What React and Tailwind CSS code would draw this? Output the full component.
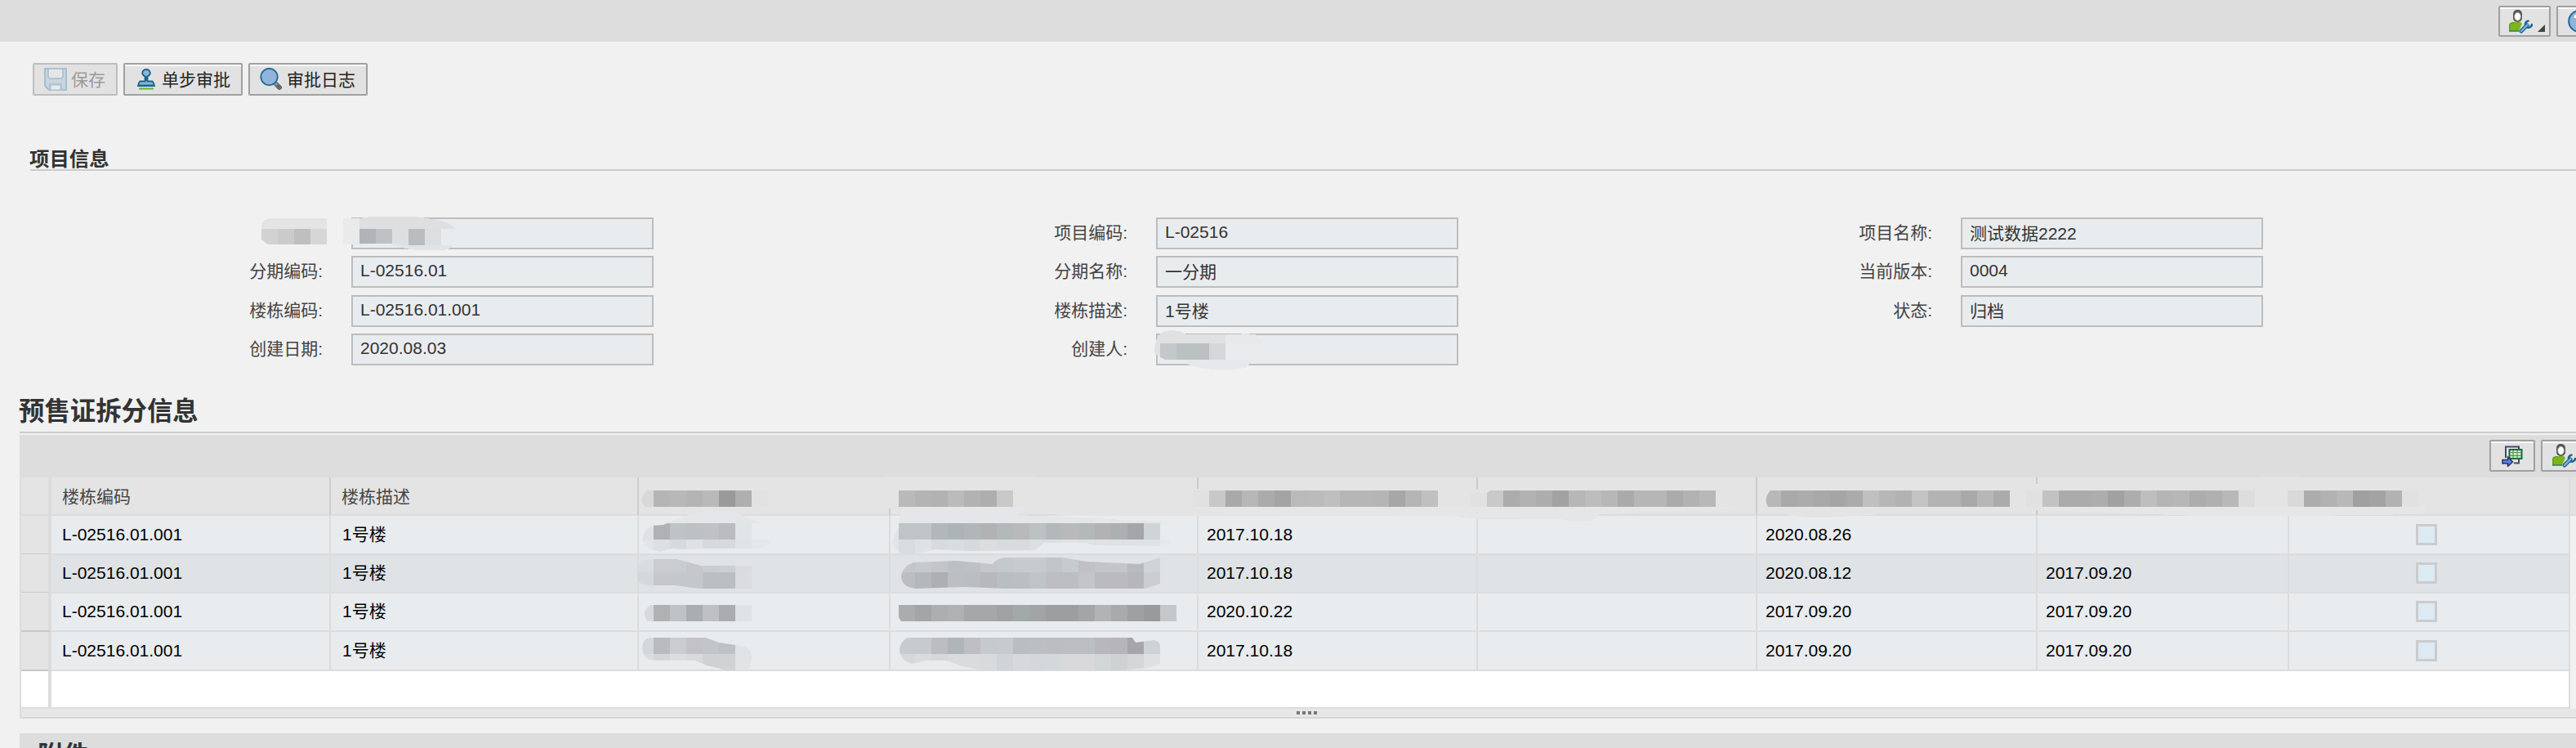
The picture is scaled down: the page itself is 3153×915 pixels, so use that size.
const headers = ['楼栋编码', '楼栋描述', '', '', '', '', '', '', '']

const rows = [
  { code: 'L-02516.01.001', name: '1号楼', d1: '2017.10.18', d2: '2020.08.26', d3: '', height: 'h-[47px]', bg: 'bg-[#e9ecef]' },
  { code: 'L-02516.01.001', name: '1号楼', d1: '2017.10.18', d2: '2020.08.12', d3: '2017.09.20', height: 'h-[47px]', bg: 'bg-[#dfe3e6]' },
  { code: 'L-02516.01.001', name: '1号楼', d1: '2020.10.22', d2: '2017.09.20', d3: '2017.09.20', height: 'h-[48px]', bg: 'bg-[#e9ecef]' },
  { code: 'L-02516.01.001', name: '1号楼', d1: '2017.10.18', d2: '2017.09.20', d3: '2017.09.20', height: 'h-[47px]', bg: 'bg-[#e9ecef]' },
]

const fields = [
  [
    { label: '', value: '' },
    { label: '分期编码:', value: 'L-02516.01' },
    { label: '楼栋编码:', value: 'L-02516.01.001' },
    { label: '创建日期:', value: '2020.08.03' },
  ],
  [
    { label: '项目编码:', value: 'L-02516' },
    { label: '分期名称:', value: '一分期', cjk: true },
    { label: '楼栋描述:', value: '1号楼', cjk: true },
    { label: '创建人:', value: '' },
  ],
  [
    { label: '项目名称:', value: '测试数据2222', cjk: true },
    { label: '当前版本:', value: '0004' },
    { label: '状态:', value: '归档', cjk: true },
  ],
]

const gridCols = 'grid grid-cols-[37px_342px_377px_308px_377px_342px_342px_343px_308px_344px]'

// pale smudges around the masked values
const halos = [
  ['M320 280V274Q324 267 332 267H400V280Z', '#e4e4e4'],
  ['M420 267H442V299H420Z', '#e9eaea'],
  ['M440 267L454 265H508L522 267Q550 270 557 280H440Z', '#dedfe1'],
  ['M475 299H557Q552 305 542 306H510Q495 304 475 299Z', '#e2e3e5'],
  ['M442 298H480V300H442Z', '#e9ecef'],
  ['M1414 434Q1411 420 1420 408Q1436 400 1452 409H1512L1527 408Q1541 411 1544 420H1420V436Z', '#dfe1e3'],
  ['M1500 409H1536Q1542 414 1544 420H1500Z', '#e7e9eb'],
  ['M1453 440H1535L1524 450Q1512 452 1500 452Q1470 453 1453 445Z', '#e6e8eb'],
  ['M786 600L800 596L1060 590L1085 583H1265L1290 587L1400 594L1480 599H1800L1832 600L1860 596H2100L2120 592L2128 600V620H2115L2090 628L1958 629L1948 637L1930 638L1910 635H1809L1775 631H1300L1258 622L1245 631H1118L1105 620L1020 629H905L933 640H815L843 630L800 620Z', '#e4e4e5'],
  ['M800 620H1460L1500 629L1775 631L1808 634L1910 635Q1945 643 1958 629L2120 622V620H2115L1460 620Z', '#e5e6e8'],
  ['M843 630Q870 620 905 629L933 640H815Z', '#e4e6e9'],
  ['M1105 620H1258L1245 630L1340 634L1430 639V640H1100Z', '#e4e6e9'],
  ['M2161 620L2170 596L2200 590Q2210 582 2228 592L2275 584Q2290 586 2290 597L2340 592H2640L2700 586H2750L2770 583H2812L2850 588L2964 597L2972 620L2965 628L2820 631H2750L2500 624H2460L2340 627L2250 632Q2200 637 2170 624Z', '#e4e4e5'],
  ['M2500 620H2972L2965 629L2820 631H2690L2500 624Z', '#e5e6e8'],
]

// each band is a run of 20px blocks; clip gives the brushed outline
const masks = [
  { id: 'm1', clip: 'M332 280H400V299H328L320 293V280Z', bands: [[320, 280, 20, ['#d2d2d2', '#cbcbcb', '#bfbfbf', '#d6d6d6']]] },
  { id: 'm2', clip: 'M420 280H557V300H495L478 298H420Z', bands: [[420, 280, 20, ['#e9eaeb', '#b0b4b8', '#c0c1c4', '#dce0e3', '#b9bdc0', '#dbdfe2', '#e9ecee']]] },
  { id: 'm3', clip: 'M1420 420H1540V440H1426L1420 437Z', bands: [[1420, 420, 20, ['#c4c8cb', '#bbc0c3', '#bbc0c3', '#d5d7da', '#e9ecef', '#e9ecef']]] },
  { id: 'm4', clip: 'M792 600H940V620H790Q780 610 792 600Z', bands: [[780, 600, 20, ['#d8d8d8', '#b5b5b5', '#b8b8b8', '#b4b4b4', '#b9b9b9', '#9a9a9a', '#afafaf', '#e2e2e2']]] },
  { id: 'm5', clip: 'M1100 600H1240V620H1100Z', bands: [[1100, 600, 20, ['#b9b9b9', '#b4b4b4', '#b2b2b2', '#bbbbbb', '#b2b2b2', '#aeaeae', '#c9c9c9']]] },
  { id: 'm6', clip: 'M1460 600H1760V620H1460Z', bands: [[1460, 600, 20, ['#e1e1e1', '#c8c8c8', '#a9a9a9', '#b7b7b7', '#ababab', '#a4a4a4', '#bababa', '#bbbbbb', '#bfbfbf', '#b6b6b6', '#b6b6b6', '#b5b5b5', '#a7a7a7', '#b5b5b5', '#c0c0c0']]] },
  { id: 'm7', clip: 'M1800 603H1820L1824 600H2100V620H1800Z', bands: [[1800, 600, 20, ['#e1e1e1', '#c9c9c9', '#acacac', '#b2b2b2', '#adadad', '#a2a2a2', '#b7b7b7', '#bdbdbd', '#b7b7b7', '#aaaaaa', '#b6b6b6', '#b6b6b6', '#ababab', '#b2b2b2', '#b8b8b8']]] },
  { id: 'm8', clip: 'M2167 600H2460V620H2164Q2158 610 2167 600Z', bands: [[2160, 600, 20, ['#b8b8b8', '#a9a9a9', '#acacac', '#a8a8a8', '#a5a5a5', '#ababab', '#c0c0c0', '#b7b7b7', '#b2b2b2', '#c3c3c3', '#b3b3b3', '#b3b3b3', '#a9a9a9', '#b7b7b7', '#ababab']]] },
  { id: 'm9', clip: 'M2480 600H2760V620H2480Z', bands: [[2480, 600, 20, ['#e1e1e1', '#c2c2c2', '#ababab', '#ababab', '#adadad', '#a1a1a1', '#adadad', '#bebebe', '#b5b5b5', '#b7b7b7', '#adadad', '#b0b0b0', '#b8b8b8', '#dddddd']]] },
  { id: 'm10', clip: 'M2800 600H2960V620H2800Z', bands: [[2800, 600, 20, ['#d9d9d9', '#acacac', '#b2b2b2', '#b8b8b8', '#a0a0a0', '#a3a3a3', '#b2b2b2', '#e1e1e1']]] },
  { id: 'm11', clip: 'M800 643L812 642L817 640H920V660H943Q942 670 928 671H860L842 672L822 671L808 675Q790 672 786 660Q788 646 800 643Z', bands: [
    [780, 640, 20, ['#dfe2e4', '#b0b1b5', '#bfc3c6', '#bcc1c4', '#c0c1c5', '#babcc0', '#e1e5e8']],
    [780, 660, 20, ['#e2e4e7', '#dde0e2', '#d6dadd', '#e0e1e4', '#d5dadd', '#d5dadd', '#e0e4e7', '#e4e8eb', '#e5e9ec']],
  ] },
  { id: 'm12', clip: 'M1100 640H1420V660H1434Q1431 668 1425 668L1340 667L1330 664H1277L1268 673L1185 674L1145 672L1125 677Q1095 683 1092 662L1100 645Z', bands: [
    [1080, 640, 20, ['#e0e4e7', '#bfc4c7', '#bfc4c7', '#b1b7bb', '#adb4b8', '#b2b6b9', '#b2b2b4', '#b3b8bb', '#b9b9bb', '#bcc1c4', '#b3b8bb', '#b9b9bb', '#b3b8bb', '#b2b2b4', '#acb0b3', '#a5a6aa', '#cfd4d7']],
    [1080, 660, 20, ['#e2e4e7', '#d8dde0', '#dfe2e5', '#d9dadd', '#d9dde0', '#d5dadd', '#dddde0', '#d7dbde', '#d9dadd', '#dbdfe2', '#dbdfe2', '#dfe2e5', '#dfe2e5', '#dfe2e5', '#dfe2e5', '#dfe2e5', '#dfe2e5', '#e5e9ec']],
  ] },
  { id: 'm13', clip: 'M800 684H828L858 692H920V720H855L826 716H795Q780 714 780 708V690Q784 685 800 684Z', bands: [
    [780, 680, 20, ['#d9dddf', '#c9cdd0', '#c9cdd0', '#c6c7ca', '#c9cdd0', '#cdcfd2', '#d8dcdf']],
    [780, 700, 20, ['#d5d8db', '#c6c7ca', '#c4c8cb', '#c4c8cb', '#babfc2', '#babfc2', '#dbdcdf']],
  ] },
  { id: 'm14', clip: 'M1118 688L1170 686L1215 690Q1220 683 1230 682H1300L1330 687L1395 690L1420 682V714L1402 720H1230L1180 718L1120 720Q1103 718 1103 704Q1106 692 1118 688Z', bands: [
    [1100, 680, 20, ['#c4c6c9', '#c6cacd', '#c2c6c9', '#bbc0c3', '#bdc1c4', '#c4c6c9', '#c4c9cc', '#c6cbce', '#c6cbce', '#c1c6c9', '#c6cbce', '#bfc1c4', '#c3c5c8', '#c3c5c8', '#b6bbbe', '#cfd4d7']],
    [1100, 700, 20, ['#bcbdc0', '#b3b8bb', '#adafb2', '#bcbec1', '#b9bec1', '#b6b8bb', '#b9bec1', '#babfc2', '#bfc4c7', '#bcbec1', '#bcbec1', '#c4c5c8', '#bbbbbf', '#bbbbbf', '#b7b7bb', '#cccdd0']],
  ] },
  { id: 'm15', clip: 'M796 740H920V760H792Q784 748 796 740Z', bands: [[780, 740, 20, ['#d7d9dc', '#b0b1b3', '#bfc3c6', '#a9aeb1', '#bfc0c4', '#abacaf', '#dfe3e6']]] },
  { id: 'm16', clip: 'M1100 740H1440V760H1103L1100 755Z', bands: [[1100, 740, 20, ['#abacae', '#a4a5a7', '#acaeb0', '#b0b1b5', '#a6a7a9', '#a6a7a9', '#a1a2a4', '#a3a8ab', '#a2a4a6', '#9c9ea0', '#9d9ea0', '#a3a5a7', '#b2b3b7', '#a8aaac', '#9e9fa1', '#989a9c', '#c4c8cb']]] },
  { id: 'm17', clip: 'M794 780H864L880 786L900 789Q920 790 920 803Q920 818 912 820H890L865 814L850 808H800Q786 806 786 792Q787 782 794 780Z', bands: [
    [780, 780, 20, ['#d3d8db', '#babbbf', '#c9cdd0', '#c3c3c7', '#c2c6c9', '#bdc2c5', '#e0e4e7']],
    [780, 800, 20, ['#d9dddf', '#d3d7da', '#dddde1', '#d7dbde', '#cfd1d5', '#cfd3d6', '#e0e4e7']],
  ] },
  { id: 'm18', clip: 'M1112 780H1386L1390 786L1412 783Q1420 784 1420 790V812L1405 817L1370 820H1200L1178 815L1158 808L1135 808L1116 812Q1101 808 1101 793Q1104 782 1112 780Z', bands: [
    [1100, 780, 20, ['#c7cbce', '#c7cbce', '#bdbdc1', '#b0b5b8', '#bfbfc3', '#c5cacd', '#c7cbce', '#b9bec1', '#bbbfc2', '#bcbdc1', '#bcbec1', '#bbbfc2', '#b8b8bc', '#b6b6ba', '#a6a6aa', '#cfd3d6']],
    [1100, 800, 20, ['#d5d8db', '#dadbde', '#d5d8db', '#dadbdf', '#dadbdf', '#d8dbde', '#d0d4d7', '#d7d8db', '#d3d7da', '#d4d8db', '#d9d9dd', '#d9d9dd', '#d2d6d9', '#cfd2d4', '#d4d7da', '#dde1e4']],
  ] },
]

function Masks() {
  return (
    <svg className="pointer-events-none absolute left-0 top-0" width="3153" height="915" shapeRendering="crispEdges">
      {halos.map(([d, fill]) => <path key={d} d={d} fill={fill} />)}
      {masks.map(m => (
        <g key={m.id} clipPath={`url(#${m.id})`}>
          <clipPath id={m.id}><path d={m.clip} /></clipPath>
          {m.bands.map(([x, y, h, colors]) => colors.map((c, i) => (
            <rect key={`${y}-${i}`} x={x + i * 20} y={y} width="20" height={h} fill={c} />
          )))}
        </g>
      ))}
    </svg>
  )
}

function SaveIcon() {
  return (
    <svg className="shrink-0" width="28" height="28" viewBox="0 0 28 28" fill="none">
      <path d="M1 1H27V27H6L1 22Z" fill="#c9d4df" stroke="#a3c0d2" strokeWidth="2" />
      <path d="M5 1H23V11L21 13H7L5 11Z" fill="#e6e6e6" stroke="#a3c0d2" strokeWidth="1.6" />
      <path d="M7 27V20H21V27" fill="#c9d4df" stroke="#a3c0d2" strokeWidth="1.6" />
      <path d="M9 22H19V26H9Z" fill="#e9e9e9" />
    </svg>
  )
}

function StampIcon() {
  return (
    <svg className="shrink-0" width="22" height="26" viewBox="0 0 22 26" fill="none">
      <path d="M9.500 9.500Q6 7.500 6.200 5Q7 1 11 1Q15 1 15.800 5Q16 7.500 12.500 9.500V15.500H18.500Q20.500 17 21 21H1Q1.500 17 3.500 15.500H9.500Z" fill="#8fb3d6" stroke="#1a6592" strokeWidth="1.800" />
      <path d="M11 9V15M1 20.500H21" stroke="#1a6592" strokeWidth="2.200" />
      <path d="M2 24.500H20" stroke="#6fb52c" strokeWidth="2.200" />
    </svg>
  )
}

function MagnifierIcon() {
  return (
    <svg className="shrink-0" width="28" height="28" viewBox="0 0 28 28" fill="none">
      <path d="M20.500 20.500L24 24" stroke="#666" strokeWidth="6" strokeLinecap="round" />
      <path d="M18 18L21 21" stroke="#999" strokeWidth="3" />
      <circle cx="11.500" cy="11" r="10.200" fill="#92b4d9" stroke="#1d6a9b" strokeWidth="1.800" />
    </svg>
  )
}

function HelpIcon() {
  return (
    <svg className="shrink-0" width="28" height="28" viewBox="0 0 28 28" fill="none">
      <circle cx="14" cy="14" r="12.800" fill="#92b4d9" stroke="#1d6a9b" strokeWidth="2" />
      <path d="M9 10Q9 6 14 6Q19 6 19 10Q19 13 14 15V18" stroke="#fff" strokeWidth="3" />
      <circle cx="14" cy="22" r="1.800" fill="#fff" />
    </svg>
  )
}

function UserWrenchIcon() {
  return (
    <svg className="shrink-0" width="29" height="29" viewBox="0 0 29 29" fill="none">
      <path d="M0 26V18Q1 15 6 15H14L16 17L12 26Z" fill="#7ab51d" />
      <path d="M1 26V18Q2 15.500 7 15.500" stroke="#5a9a2c" strokeWidth="1.200" />
      <path d="M0 26H12" stroke="#3f8055" strokeWidth="1.600" />
      <rect x="5" y="0" width="11" height="15" rx="5" fill="#555" />
      <ellipse cx="10.500" cy="8.200" rx="3.800" ry="5" fill="#fff" stroke="#aaa" strokeWidth=".8" />
      <path d="M15 26L22 19" stroke="#1f6592" strokeWidth="5" strokeLinecap="round" />
      <path d="M24.500 13.500Q19.500 14 20 19Q21.500 22.500 25 21.500Q28 20.500 28.500 17" stroke="#1f6592" strokeWidth="2.600" />
      <path d="M15 26L22.500 18.500" stroke="#7fb2dc" strokeWidth="2.400" strokeLinecap="round" />
    </svg>
  )
}

function ExportIcon() {
  return (
    <svg className="shrink-0" width="26" height="26" viewBox="0 0 26 26" fill="none">
      <path d="M5 15V1.500H21V5M15 21.500H21V17" fill="#ebebf0" stroke="#45476b" strokeWidth="2" />
      <rect x="9.500" y="5" width="15" height="11" fill="#dce9c5" stroke="#0d6b47" strokeWidth="2" />
      <path d="M10 8.500H24M10 12.300H24M14 6V16M19 6V16" stroke="#4f9a55" strokeWidth="1.200" />
      <path d="M1 17.500H7.500V14L13.500 20L7.500 25.500V22H1Z" fill="#547ff0" stroke="#303550" strokeWidth="1.500" />
    </svg>
  )
}

function Button({ children, className }) {
  return (
    <button className={`flex shrink-0 items-center rounded-[2px] border-2 border-[#a0a0a0] bg-[#e2e2e2] shadow-[inset_0_2px_0_#fff] ${className}`}>
      {children}
    </button>
  )
}

function Field({ label, value, cjk }) {
  return (
    <div className="flex items-start">
      <span className="mr-[35px] mt-[5px] w-[120px] text-right leading-[28px] text-[#444]">{label}</span>
      <div className={`h-[39px] w-[370px] border-2 border-[#bdbdbd] bg-[#e9ecef] pl-[9px] leading-[28px] text-[#333] ${cjk ? 'pt-[4px]' : 'pt-[2px]'}`}>{value}</div>
    </div>
  )
}

function Cell({ children, className = '' }) {
  return <div className={`border-b-2 border-r-2 border-[#dcdcdc] ${className}`}>{children}</div>
}

export default function App() {
  return (
    <div className="relative flex h-[915px] w-[3153px] flex-col overflow-hidden bg-[#f1f1f1] font-['Liberation_Sans','Noto_Sans_CJK_SC',sans-serif] text-[21px]">
      <header className="flex h-[51px] shrink-0 items-start gap-[7px] bg-[#ddd] pl-[3058px] pt-[7px]">
        <Button className="h-[38px] w-[64px] pl-[11px]">
          <UserWrenchIcon />
          <svg className="ml-[6px] mt-[17px] shrink-0" width="9" height="9"><path d="M9 0V9H0Z" fill="#444" /></svg>
        </Button>
        <Button className="h-[38px] w-[64px] pl-[12px]"><HelpIcon /></Button>
      </header>

      <div className="flex h-[131px] shrink-0 items-start gap-[7px] pl-[40px] pt-[26px] leading-[28px] text-[#222]">
        <button className="flex h-[40px] w-[104px] items-center gap-[5px] rounded-[2px] border-2 border-[#bebebe] bg-[#e2e2e2] pl-[12px] text-[#9b9b9b]">
          <SaveIcon />
          <span className="pt-[2px]">保存</span>
        </button>
        <Button className="h-[40px] w-[146px] gap-[8px] pl-[15px]">
          <StampIcon />
          <span className="pt-[2px]">单步审批</span>
        </Button>
        <Button className="h-[40px] w-[146px] gap-[5px] pl-[12px]">
          <MagnifierIcon />
          <span className="pt-[2px]">审批日志</span>
        </Button>
      </div>

      <h2 className="ml-[37px] h-[27px] shrink-0 border-b-2 border-[#ccc] text-[24.400px] font-bold leading-[25px] text-[#333]">
        <span className="-ml-px">项目信息</span>
      </h2>

      <div className="flex h-[275px] shrink-0 gap-[460px] pl-[275px] pt-[57px]">
        {fields.map((col, i) => (
          <div key={i} className="flex w-[525px] flex-col gap-[8.400px]">
            {col.map((f, j) => <Field key={j} {...f} />)}
          </div>
        ))}
      </div>

      <h2 className="ml-[24px] h-[46px] shrink-0 border-b-2 border-[#ccc] text-[31.400px] font-bold leading-[39px] text-[#333]">
        <span className="-ml-px">预售证拆分信息</span>
      </h2>

      <section className="ml-[24px] mt-[2px] shrink-0 border-l-2 border-[#dcdcdc]">
        <div className="-ml-[2px] flex h-[52px] gap-[7px] bg-[#ddd] pl-[3023px] pt-[6px]">
          <Button className="h-[39px] w-[56px] pl-[13px]"><ExportIcon /></Button>
          <Button className="h-[39px] w-[64px] pl-[12px]"><UserWrenchIcon /></Button>
        </div>

        <div className="flex">
          <div className="w-[3120px] shrink-0">
            <div className={`${gridCols} h-[47px] bg-[#e4e4e4] leading-[48px] text-[#444]`}>
              <div className="border-b-2 border-r-4 border-[#dcdcdc]" />
              {headers.map((h, i) => (
                <div key={i} className={`h-[47px] border-b-2 border-b-[#dcdcdc] border-r-2 pl-[13px] ${i === 8 ? 'border-r-[#dcdcdc]' : 'border-r-[#ccc]'}`}>{h}</div>
              ))}
            </div>
            {rows.map((r, i) => (
              <div key={i} className={`${gridCols} ${r.height} ${r.bg} leading-[46px] text-black`}>
                <div className="border-b-2 border-r-4 border-b-[#c8c8c8] border-r-[#dcdcdc] bg-[#e4e4e4]" />
                <Cell className="pl-[13px]">{r.code}</Cell>
                <Cell className="pl-[14px]">{r.name}</Cell>
                <Cell />
                <Cell />
                <Cell className="pl-[10px]">{r.d1}</Cell>
                <Cell />
                <Cell className="pl-[10px]">{r.d2}</Cell>
                <Cell className="pl-[10px]">{r.d3}</Cell>
                <Cell className="pl-[155px] pt-[10px]">
                  <span className="block h-[26px] w-[26px] border-[3px] border-[#ccc] bg-[#dceaf4]" />
                </Cell>
              </div>
            ))}
            <div className="flex h-[47px] border-b-2 border-[#dcdcdc] bg-white">
              <div className="w-[37px] border-r-4 border-[#dcdcdc]" />
              <div className="flex-1 border-r-2 border-[#dcdcdc]" />
            </div>
          </div>
          <div className="flex-1">
            <div className="h-[47px] border-b-2 border-[#dcdcdc] bg-[#e2e2e2]" />
          </div>
        </div>

        <div className="flex h-[12px] items-center gap-[3px] border-b-2 border-[#d6d6d6] bg-[#e7e7e7] pl-[1561px]">
          {[0, 1, 2, 3].map(i => <i key={i} className="h-[4px] w-[4px] bg-[#777]" />)}
        </div>
      </section>

      {/* next panel starts at the bottom edge of the window */}
      <section className="ml-[24px] mt-[18px] h-[60px] shrink-0 bg-[#ddd] pl-[22px] pt-[10px]">
        <h2 className="text-[31.400px] font-bold leading-[36px] text-[#333]">附件</h2>
      </section>

      <Masks />
    </div>
  )
}
